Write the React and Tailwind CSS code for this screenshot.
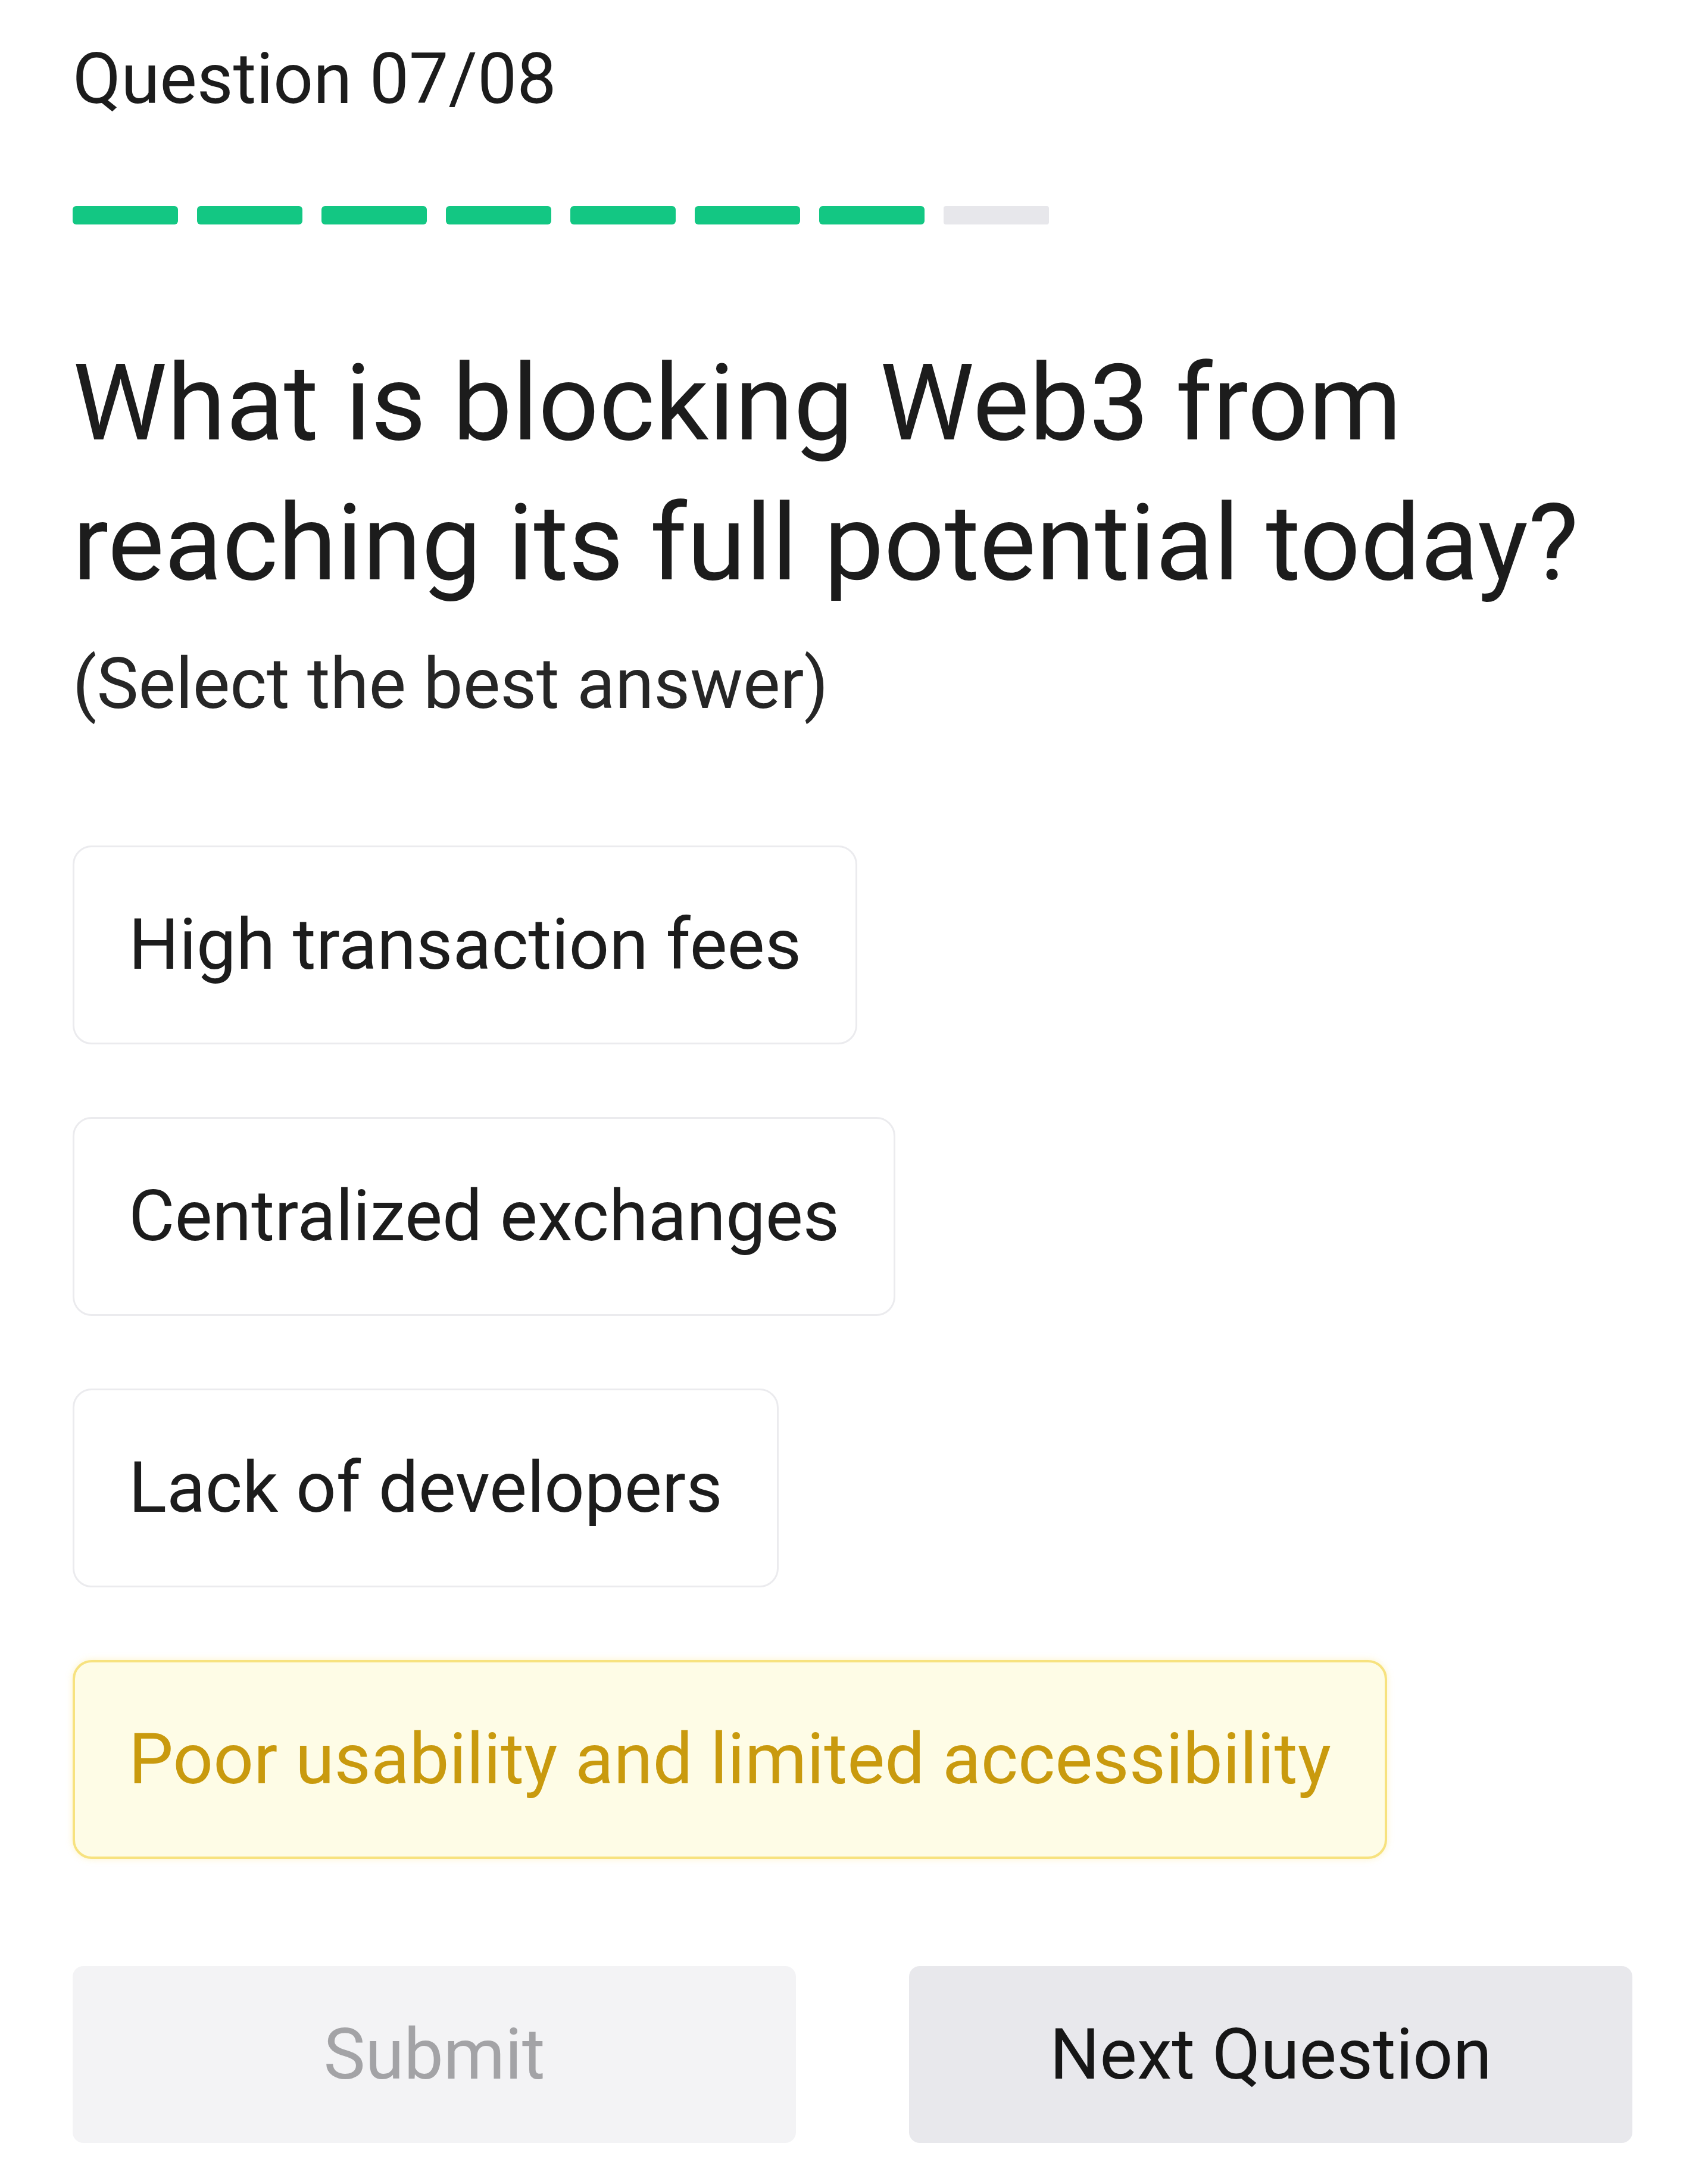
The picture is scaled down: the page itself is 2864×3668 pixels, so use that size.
import React from "react";

const options = [
  { label: "High transaction fees", selected: false },
  { label: "Centralized exchanges", selected: false },
  { label: "Lack of developers", selected: false },
  { label: "Poor usability and limited accessibility", selected: true },
];

export default function App() {
  const total = 8;
  const done = 7;
  return (
    <div
      className="min-h-[3668px] w-full bg-white px-[122px] pt-[74px]"
      style={{ fontFamily: "Roboto, 'Liberation Sans', Arial, sans-serif" }}
    >
      <div className="text-[118px] leading-[118px] text-[#1c1c1c]">Question 07/08</div>

      <div className="mt-[154px] flex gap-[32px]">
        {Array.from({ length: total }).map((_, i) => (
          <div
            key={i}
            className={
              i < done
                ? "h-[31px] w-[177px] rounded-[6px] bg-[#13c783]"
                : "h-[31px] w-[177px] rounded-[4px] bg-[#e7e7eb]"
            }
          />
        ))}
      </div>

      <h1 className="mt-[183px] text-[179px] leading-[235px] font-normal text-[#1c1c1c]">
        What is blocking Web3 from
        <br />
        reaching its full potential today?
      </h1>
      <p className="mt-[49px] text-[118px] leading-[140px] text-[#262626]">(Select the best answer)</p>

      <div className="mt-[201px] flex flex-col items-start gap-[122px]">
        {options.map((o) => (
          <div
            key={o.label}
            className={
              o.selected
                ? "flex h-[334px] items-center rounded-[32px] border-[4px] border-[#f7e27f] bg-[#fefce6] px-[90px] text-[119px] leading-[120px] text-[#c99a0e] shadow-[0_0_12px_rgba(250,220,100,0.35)]"
                : "flex h-[334px] items-center rounded-[32px] border-[3px] border-[#ebebee] bg-white px-[91px] text-[119px] leading-[120px] text-[#1c1c1c]"
            }
          >
            {o.label}
          </div>
        ))}
      </div>

      <div className="mt-[180px] grid grid-cols-2 gap-[190px]">
        <button className="flex h-[297px] items-center justify-center rounded-[18px] bg-[#f3f3f5] text-[118px] leading-[118px] text-[#a3a3a6]">
          Submit
        </button>
        <button className="flex h-[297px] items-center justify-center rounded-[18px] bg-[#e8e8ec] text-[118px] leading-[118px] text-[#161616]">
          Next Question
        </button>
      </div>
    </div>
  );
}
